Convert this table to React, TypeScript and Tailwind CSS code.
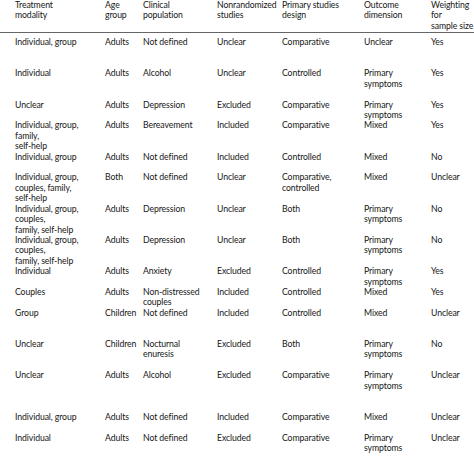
const header = [
  "Treatment\nmodality",
  "Age\ngroup",
  "Clinical\npopulation",
  "Nonrandomized\nstudies",
  "Primary studies\ndesign",
  "Outcome\ndimension",
  "Weighting\nfor\nsample size",
];

// [lines, cells...]
const rows: [number, string[]][] = [
  [3, ["Individual, group", "Adults", "Not defined", "Unclear", "Comparative", "Unclear", "Yes"]],
  [3, ["Individual", "Adults", "Alcohol", "Unclear", "Controlled", "Primary\nsymptoms", "Yes"]],
  [2, ["Unclear", "Adults", "Depression", "Excluded", "Comparative", "Primary\nsymptoms", "Yes"]],
  [3, ["Individual, group,\nfamily,\nself-help", "Adults", "Bereavement", "Included", "Comparative", "Mixed", "Yes"]],
  [2, ["Individual, group", "Adults", "Not defined", "Included", "Controlled", "Mixed", "No"]],
  [3, ["Individual, group,\ncouples, family,\nself-help", "Both", "Not defined", "Unclear", "Comparative,\ncontrolled", "Mixed", "Unclear"]],
  [3, ["Individual, group,\ncouples,\nfamily, self-help", "Adults", "Depression", "Unclear", "Both", "Primary\nsymptoms", "No"]],
  [3, ["Individual, group,\ncouples,\nfamily, self-help", "Adults", "Depression", "Unclear", "Both", "Primary\nsymptoms", "No"]],
  [2, ["Individual", "Adults", "Anxiety", "Excluded", "Controlled", "Primary\nsymptoms", "Yes"]],
  [2, ["Couples", "Adults", "Non-distressed\ncouples", "Included", "Controlled", "Mixed", "Yes"]],
  [3, ["Group", "Children", "Not defined", "Included", "Controlled", "Mixed", "Unclear"]],
  [3, ["Unclear", "Children", "Nocturnal\nenuresis", "Excluded", "Both", "Primary\nsymptoms", "No"]],
  [4, ["Unclear", "Adults", "Alcohol", "Excluded", "Comparative", "Primary\nsymptoms", "Unclear"]],
  [2, ["Individual, group", "Adults", "Not defined", "Included", "Comparative", "Mixed", "Unclear"]],
  [2, ["Individual", "Adults", "Not defined", "Excluded", "Comparative", "Primary\nsymptoms", "Unclear"]],
];

const widths = ["w-[90px]", "w-[38px]", "w-[74px]", "w-[65px]", "w-[82px]", "w-[67px]", "w-[43px]"];
const heights: Record<number, string> = {
  2: "h-[20.84px]",
  3: "h-[31.26px]",
  4: "h-[41.68px]",
};

function Cell({ text, width }: { text: string; width: string }) {
  return <div className={`${width} shrink-0 whitespace-pre`}>{text}</div>;
}

export default function App() {
  return (
    <div
      className="h-[474px] w-[474px] overflow-hidden bg-white text-[8.7px] leading-[10.42px] tracking-[-0.1px] text-[#161616]"
      style={{ fontFamily: "Lato, 'Liberation Sans', sans-serif" }}
    >
      <div className="h-[33px] border-b border-[#666]">
        <div className="flex pl-[15px]">
          {header.map((h, i) => (
            <Cell key={i} text={h} width={widths[i]} />
          ))}
        </div>
      </div>
      <div className="flex flex-col pt-[4px]">
        {rows.map(([lines, cells], r) => (
          <div key={r} className={`flex pl-[15px] ${heights[lines]}`}>
            {cells.map((c, i) => (
              <Cell key={i} text={c} width={widths[i]} />
            ))}
          </div>
        ))}
      </div>
    </div>
  );
}
